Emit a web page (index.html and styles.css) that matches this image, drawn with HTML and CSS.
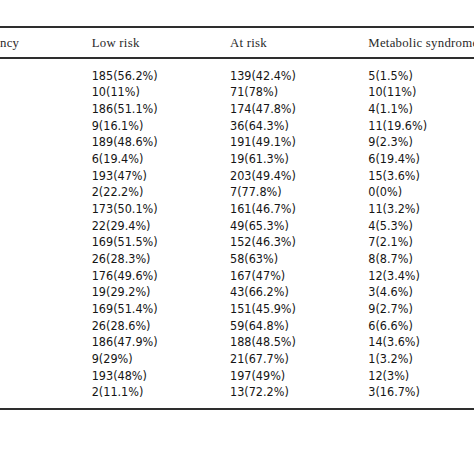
FILE: index.html
```html
<!DOCTYPE html>
<html>
<head>
<meta charset="utf-8">
<link rel="stylesheet" href="styles.css">
</head>
<body>
<div class="frame">
  <div class="table">
    <div class="head">
      <div class="hcell">Frequency</div>
      <div class="hcell">Low risk</div>
      <div class="hcell">At risk</div>
      <div class="hcell">Metabolic syndrome</div>
    </div>
    <div class="body">
      <div class="row"><div></div><div>185(56.2%)</div><div>139(42.4%)</div><div>5(1.5%)</div></div>
      <div class="row"><div></div><div>10(11%)</div><div>71(78%)</div><div>10(11%)</div></div>
      <div class="row"><div></div><div>186(51.1%)</div><div>174(47.8%)</div><div>4(1.1%)</div></div>
      <div class="row"><div></div><div>9(16.1%)</div><div>36(64.3%)</div><div>11(19.6%)</div></div>
      <div class="row"><div></div><div>189(48.6%)</div><div>191(49.1%)</div><div>9(2.3%)</div></div>
      <div class="row"><div></div><div>6(19.4%)</div><div>19(61.3%)</div><div>6(19.4%)</div></div>
      <div class="row"><div></div><div>193(47%)</div><div>203(49.4%)</div><div>15(3.6%)</div></div>
      <div class="row"><div></div><div>2(22.2%)</div><div>7(77.8%)</div><div>0(0%)</div></div>
      <div class="row"><div></div><div>173(50.1%)</div><div>161(46.7%)</div><div>11(3.2%)</div></div>
      <div class="row"><div></div><div>22(29.4%)</div><div>49(65.3%)</div><div>4(5.3%)</div></div>
      <div class="row"><div></div><div>169(51.5%)</div><div>152(46.3%)</div><div>7(2.1%)</div></div>
      <div class="row"><div></div><div>26(28.3%)</div><div>58(63%)</div><div>8(8.7%)</div></div>
      <div class="row"><div></div><div>176(49.6%)</div><div>167(47%)</div><div>12(3.4%)</div></div>
      <div class="row"><div></div><div>19(29.2%)</div><div>43(66.2%)</div><div>3(4.6%)</div></div>
      <div class="row"><div></div><div>169(51.4%)</div><div>151(45.9%)</div><div>9(2.7%)</div></div>
      <div class="row"><div></div><div>26(28.6%)</div><div>59(64.8%)</div><div>6(6.6%)</div></div>
      <div class="row"><div></div><div>186(47.9%)</div><div>188(48.5%)</div><div>14(3.6%)</div></div>
      <div class="row"><div></div><div>9(29%)</div><div>21(67.7%)</div><div>1(3.2%)</div></div>
      <div class="row"><div></div><div>193(48%)</div><div>197(49%)</div><div>12(3%)</div></div>
      <div class="row"><div></div><div>2(11.1%)</div><div>13(72.2%)</div><div>3(16.7%)</div></div>
    </div>
  </div>
</div>
</body>
</html>
```

FILE: styles.css
```css
html, body {
  margin: 0;
  padding: 0;
  background: #ffffff;
  width: 474px;
  height: 474px;
  overflow: hidden;
}
.frame {
  width: 474px;
  height: 474px;
  overflow: hidden;
  padding-top: 26px;
  box-sizing: border-box;
}
.table {
  margin-left: -37px;
  width: 560px;
  border-top: 2px solid #2e2e2e;
  border-bottom: 2px solid #2e2e2e;
}
.head {
  display: grid;
  grid-template-columns: 128.7px 138.3px 138.3px 160px;
  height: 29px;
  align-items: center;
  border-bottom: 2px solid #2e2e2e;
  font-family: "Liberation Serif", serif;
  font-size: 12.8px;
  letter-spacing: 0.25px;
  color: #2a2a2a;
}
.hcell {
  white-space: nowrap;
  padding-top: 1px;
}
.body {
  padding-top: 8.7px;
  padding-bottom: 7px;
  font-family: "DejaVu Sans Condensed", "DejaVu Sans", sans-serif;
  font-stretch: condensed;
  font-size: 12.5px;
  color: #151515;
}
.row {
  display: grid;
  grid-template-columns: 128.7px 138.3px 138.3px 160px;
  height: 16.67px;
  line-height: 16.67px;
  white-space: nowrap;
}
```
